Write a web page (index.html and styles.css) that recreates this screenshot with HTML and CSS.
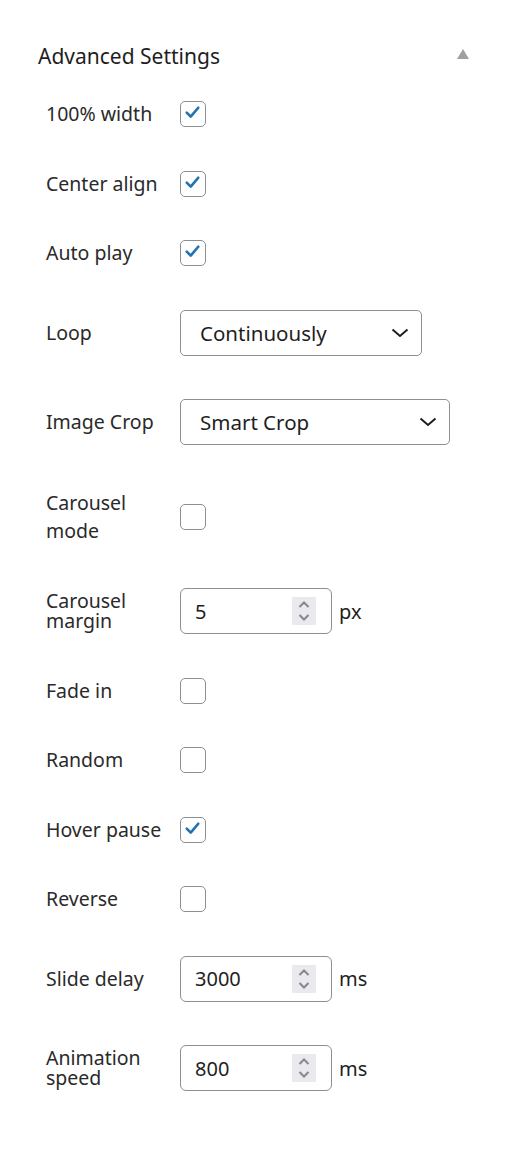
FILE: index.html
```html
<!DOCTYPE html>
<html lang="en">

<head>
  <meta charset="UTF-8">
  <meta name="viewport" content="width=device-width, initial-scale=1.0">
  <title>Advanced Settings</title>

  <link rel="stylesheet" href="styles.css">
</head>

<body>
  <div class="panel">
    <div class="panel-header">
      <h2 class="panel-title">Advanced Settings</h2>
      <span class="toggle"></span>
    </div>

    <div class="fields">
      <div class="field">
        <label class="field-label">100% width</label>
        <span class="checkbox checked">
          <svg viewBox="0 0 26 26"><path d="M6.5 12 L11 16.5 L19.5 6.5" /></svg>
        </span>
      </div>

      <div class="field">
        <label class="field-label">Center align</label>
        <span class="checkbox checked">
          <svg viewBox="0 0 26 26"><path d="M6.5 12 L11 16.5 L19.5 6.5" /></svg>
        </span>
      </div>

      <div class="field">
        <label class="field-label">Auto play</label>
        <span class="checkbox checked">
          <svg viewBox="0 0 26 26"><path d="M6.5 12 L11 16.5 L19.5 6.5" /></svg>
        </span>
      </div>

      <div class="field">
        <label class="field-label">Loop</label>
        <div class="select select-loop">
          <span>Continuously</span>
          <svg class="chevron" viewBox="0 0 18 10"><path d="M1.5 1.5 L9 8 L16.5 1.5" /></svg>
        </div>
      </div>

      <div class="field">
        <label class="field-label">Image Crop</label>
        <div class="select select-crop">
          <span>Smart Crop</span>
          <svg class="chevron" viewBox="0 0 18 10"><path d="M1.5 1.5 L9 8 L16.5 1.5" /></svg>
        </div>
      </div>

      <div class="field">
        <label class="field-label loose">Carousel mode</label>
        <span class="checkbox"></span>
      </div>

      <div class="field">
        <label class="field-label tight">Carousel margin</label>
        <div class="number">
          <span>5</span>
          <span class="spin">
            <svg viewBox="0 0 24 28"><path d="M7.5 10 L12 5.5 L16.5 10" /><path d="M7.5 18 L12 22.5 L16.5 18" /></svg>
          </span>
        </div>
        <span class="unit">px</span>
      </div>

      <div class="field">
        <label class="field-label">Fade in</label>
        <span class="checkbox"></span>
      </div>

      <div class="field">
        <label class="field-label">Random</label>
        <span class="checkbox"></span>
      </div>

      <div class="field">
        <label class="field-label">Hover pause</label>
        <span class="checkbox checked">
          <svg viewBox="0 0 26 26"><path d="M6.5 12 L11 16.5 L19.5 6.5" /></svg>
        </span>
      </div>

      <div class="field">
        <label class="field-label">Reverse</label>
        <span class="checkbox"></span>
      </div>

      <div class="field">
        <label class="field-label tight">Slide delay</label>
        <div class="number">
          <span>3000</span>
          <span class="spin">
            <svg viewBox="0 0 24 28"><path d="M7.5 10 L12 5.5 L16.5 10" /><path d="M7.5 18 L12 22.5 L16.5 18" /></svg>
          </span>
        </div>
        <span class="unit">ms</span>
      </div>

      <div class="field">
        <label class="field-label tight">Animation speed</label>
        <div class="number">
          <span>800</span>
          <span class="spin">
            <svg viewBox="0 0 24 28"><path d="M7.5 10 L12 5.5 L16.5 10" /><path d="M7.5 18 L12 22.5 L16.5 18" /></svg>
          </span>
        </div>
        <span class="unit">ms</span>
      </div>
    </div>
  </div>
</body>

</html>
```

FILE: styles.css
```css
body {
  margin: 0;
  background-color: #fff;
  font-family: "Noto Sans", "Open Sans", sans-serif;
  color: #1e1e1e;
}

.panel {
  width: 520px;
  padding: 42px 0 60px 38px;
  box-sizing: border-box;
}

.panel-header {
  display: flex;
  align-items: center;
  justify-content: space-between;
  height: 28px;
  padding-right: 51px;
}

.panel-title {
  margin: 0;
  font-size: 21px;
  font-weight: 400;
  line-height: 28px;
}

/* 접기 버튼: 회색 삼각형 */
.toggle {
  width: 0;
  height: 0;
  border-left: 6px solid transparent;
  border-right: 6px solid transparent;
  border-bottom: 10px solid #a0a0a0;
  margin-top: -4px;
}

.fields {
  display: flex;
  flex-direction: column;
  gap: 43.5px;
  margin-top: 31px;
  padding-left: 8px;
}

.field {
  display: flex;
  align-items: center;
}

.field-label {
  flex: 0 0 120px;
  margin-right: 14px;
  font-size: 19.5px;
  line-height: 26px;
  color: #2a2a2a;
}

/* 두 줄 라벨: 체크박스 행은 넓게, 입력 행은 좁게 */
.field-label.loose {
  line-height: 28px;
}

.field-label.tight {
  line-height: 20px;
}

.checkbox {
  display: block;
  width: 26px;
  height: 26px;
  border: 1.5px solid #8f8f8f;
  border-radius: 5px;
  box-sizing: border-box;
}

.checkbox svg {
  display: block;
  width: 23px;
  height: 23px;
}

.checkbox path {
  fill: none;
  stroke: #2271b1;
  stroke-width: 3;
  stroke-linecap: round;
  stroke-linejoin: round;
}

.select {
  display: flex;
  align-items: center;
  justify-content: space-between;
  height: 46px;
  padding: 0 12px 0 19px;
  border: 1.5px solid #8f8f8f;
  border-radius: 5px;
  box-sizing: border-box;
  font-size: 20.5px;
}

.select-loop {
  width: 242px;
}

.select-crop {
  width: 270px;
}

.chevron {
  width: 18px;
  height: 10px;
}

.chevron path {
  fill: none;
  stroke: #1e1e1e;
  stroke-width: 2;
}

.number {
  display: flex;
  align-items: center;
  justify-content: space-between;
  width: 152px;
  height: 46px;
  padding: 0 15px 0 14px;
  border: 1.5px solid #8f8f8f;
  border-radius: 6px;
  box-sizing: border-box;
  font-size: 20px;
}

.spin {
  display: block;
  width: 24px;
  height: 28px;
  background-color: #e9e9ee;
}

.spin svg {
  display: block;
  width: 24px;
  height: 28px;
}

.spin path {
  fill: none;
  stroke: #86868c;
  stroke-width: 2;
}

.unit {
  margin-left: 7px;
  font-size: 20px;
}
```
